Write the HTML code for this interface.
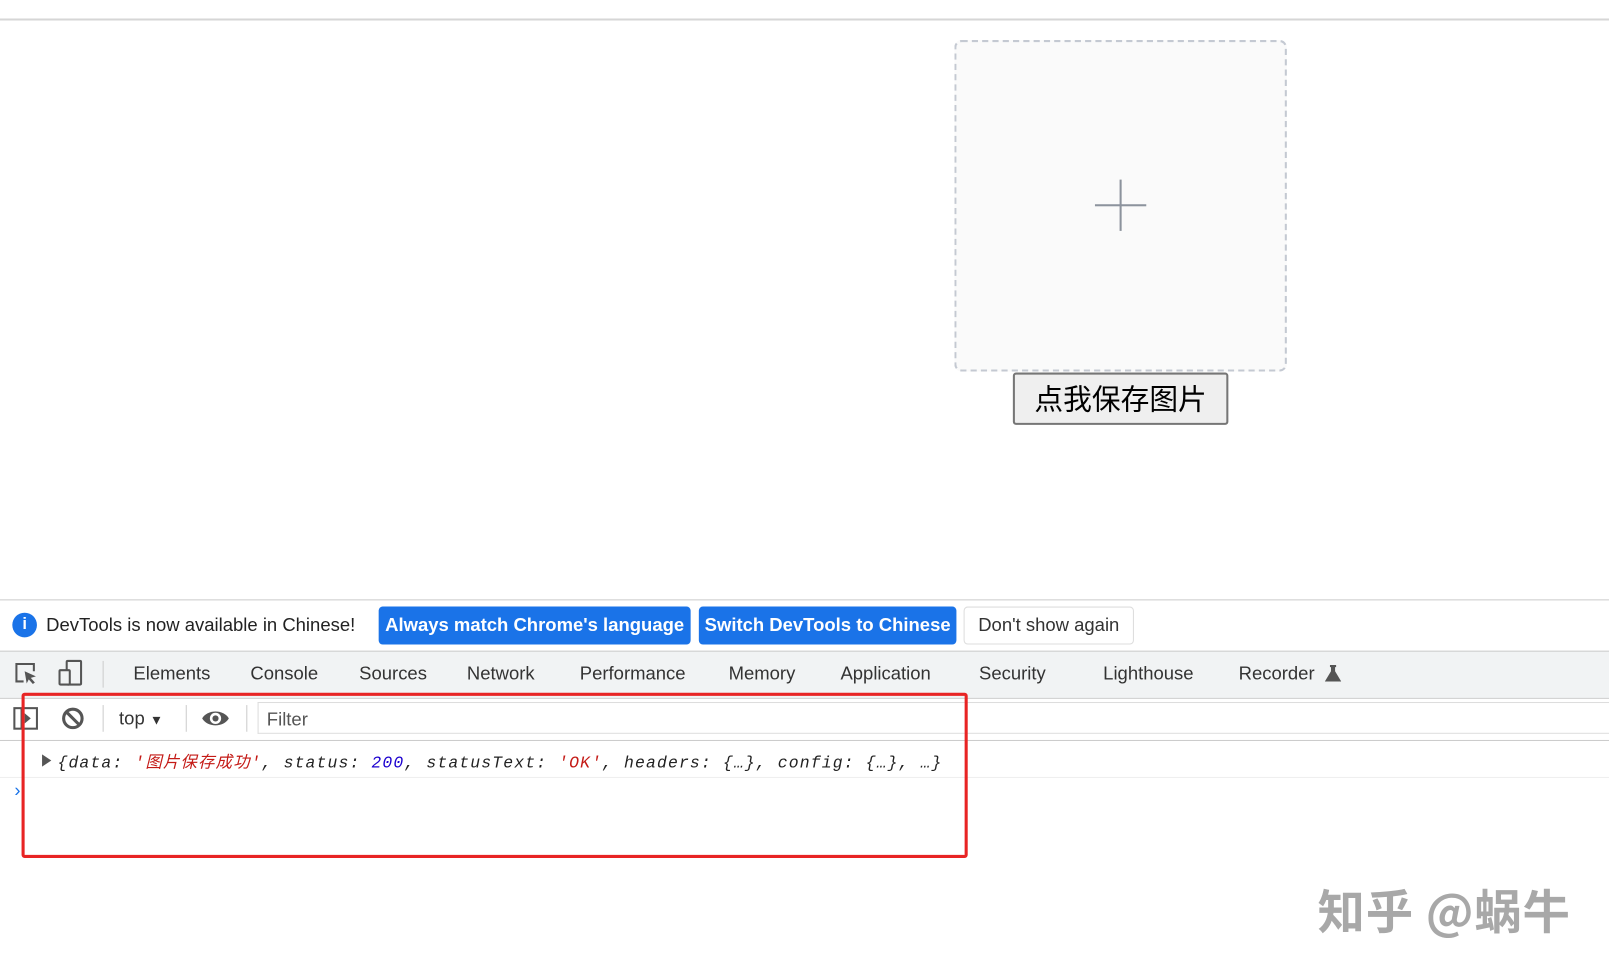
<!DOCTYPE html>
<html><head><meta charset="utf-8"><style>
html,body{margin:0;padding:0;background:#fff;overflow:hidden;width:1609px;height:976px}
#w{position:absolute;left:0;top:0;width:1568px;height:951px;transform:scale(1.0262,1.0263);transform-origin:0 0;font-family:"Liberation Sans","Noto Sans CJK SC",sans-serif}
.a{position:absolute}
.tab{position:absolute;top:646px;font-size:18px;color:#333;}
.btn{position:absolute;top:591px;height:37px;border-radius:4px;background:#1a73e8;color:#fff;font-size:18px;line-height:37px;text-align:center;font-weight:bold}
.mono{font-family:"Liberation Mono","Noto Sans CJK SC",monospace;font-style:italic;font-size:16px;letter-spacing:1.1px}
</style></head><body><div id="w">
<div class="a" style="left:0;top:18px;width:1568px;height:2px;background:#d6d6d6"></div>
<div class="a" style="left:930px;top:39px;width:320px;height:319px;border:2px dashed #c4c9d2;border-radius:7px;background:#fafafa"></div>
<div class="a" style="left:1067px;top:199px;width:50px;height:2px;background:#8c939d"></div>
<div class="a" style="left:1091px;top:175px;width:2px;height:50px;background:#8c939d"></div>
<div class="a" style="left:987px;top:363px;width:206px;height:47px;border:2px solid #767676;border-radius:3px;background:#efefef;font-size:28px;line-height:49px;text-align:center;color:#000">点我保存图片</div>

<div class="a" style="left:0;top:584px;width:1568px;height:1px;background:#ccc"></div>
<div class="a" style="left:12px;top:597px;width:24px;height:24px;border-radius:50%;background:#1a73e8;color:#fff;font-size:16px;line-height:24px;text-align:center;font-weight:bold">i</div>
<div class="a" style="left:45px;top:599px;font-size:18px;color:#222">DevTools is now available in Chinese!</div>
<div class="btn" style="left:369px;width:304px">Always match Chrome's language</div>
<div class="btn" style="left:681px;width:251px">Switch DevTools to Chinese</div>
<div class="a" style="left:939px;top:591px;width:164px;height:35px;border:1px solid #ddd;border-radius:4px;color:#333;font-size:18px;line-height:35px;text-align:center">Don't show again</div>

<div class="a" style="left:0;top:634px;width:1568px;height:45px;background:#f1f3f4;border-top:1px solid #ccc;border-bottom:1px solid #ccc"></div>
<svg class="a" style="left:14px;top:644px" width="24" height="26" viewBox="0 0 24 26" fill="none" stroke="#555" stroke-width="2"><path d="M9 20H2V3h17v7"/><path d="M10 10l11 5-5 1.5 4 4.5-2 1.5-4-4.5-2 4z" fill="#555" stroke="none"/></svg>
<svg class="a" style="left:56px;top:642px" width="26" height="28" viewBox="0 0 26 28" fill="none" stroke="#555" stroke-width="2"><rect x="9" y="2" width="14" height="23" rx="1"/><rect x="2" y="11" width="10" height="14" rx="1" fill="#f1f3f4"/></svg>
<div class="a" style="left:100px;top:644px;width:1px;height:26px;background:#ccc"></div>
<div class="tab" style="left:130px">Elements</div><div class="tab" style="left:244px">Console</div><div class="tab" style="left:350px">Sources</div><div class="tab" style="left:455px">Network</div><div class="tab" style="left:565px">Performance</div><div class="tab" style="left:710px">Memory</div><div class="tab" style="left:819px">Application</div><div class="tab" style="left:954px">Security</div><div class="tab" style="left:1075px">Lighthouse</div><div class="tab" style="left:1207px">Recorder</div>
<svg class="a" style="left:1291px;top:647px" width="16" height="18" viewBox="0 0 16 18"><path d="M5 1h6v2h-1v4l6 10H0L6 7V3H5z" fill="#555"/></svg>

<div class="a" style="left:0;top:681px;width:1568px;height:40px;border-bottom:1px solid #ccc;background:#fff"></div>
<svg class="a" style="left:12px;top:688px" width="26" height="24" viewBox="0 0 26 24" fill="none" stroke="#555" stroke-width="2"><rect x="2" y="2" width="22" height="20"/><path d="M9 2v20"/><path d="M12 7l6 5-6 5z" fill="#555" stroke="none"/></svg>
<svg class="a" style="left:59px;top:688px" width="24" height="24" viewBox="0 0 24 24" fill="none" stroke="#555" stroke-width="3"><circle cx="12" cy="12" r="9"/><path d="M6 6l12 12"/></svg>
<div class="a" style="left:100px;top:687px;width:1px;height:26px;background:#ccc"></div>
<div class="a" style="left:116px;top:690px;font-size:18px;color:#333">top <span style="font-size:13px">▼</span></div>
<div class="a" style="left:181px;top:687px;width:1px;height:26px;background:#ccc"></div>
<svg class="a" style="left:196px;top:690px" width="28" height="20" viewBox="0 0 28 20"><path d="M1 10C6 1 22 1 27 10 22 19 6 19 1 10z" fill="#555"/><circle cx="14" cy="10" r="5.5" fill="#fff"/><circle cx="14" cy="10" r="3" fill="#555"/></svg>
<div class="a" style="left:240px;top:687px;width:1px;height:26px;background:#ccc"></div>
<div class="a" style="left:251px;top:684px;width:1317px;height:31px;border:1px solid #ddd;border-right:none;font-size:18px;color:#555;line-height:33px;padding-left:8px;box-sizing:border-box">Filter</div>

<div class="a" style="left:41px;top:735px;width:0;height:0;border-left:9px solid #555;border-top:6px solid transparent;border-bottom:6px solid transparent"></div>
<div class="a mono" style="left:56px;top:729px;color:#222;white-space:pre">{data: <span style="color:#c41a16">'图片保存成功'</span>, status: <span style="color:#1c00cf">200</span>, statusText: <span style="color:#c41a16">'OK'</span>, headers: {…}, config: {…}, …}</div>
<div class="a" style="left:0;top:757px;width:1568px;height:1px;background:#eee"></div>
<div class="a" style="left:14px;top:760px;color:#1a73e8;font-size:18px">›</div>

<div class="a" style="left:21px;top:675px;width:916px;height:155px;border:3px solid #e82424;border-radius:3px"></div>
<div class="a" style="left:1284px;top:858px;font-size:46px;color:#a8a8a8;font-family:'Noto Sans CJK SC',sans-serif;white-space:nowrap;line-height:56px;letter-spacing:1px;font-weight:bold">知乎 @蜗牛</div>
</div></body></html>
